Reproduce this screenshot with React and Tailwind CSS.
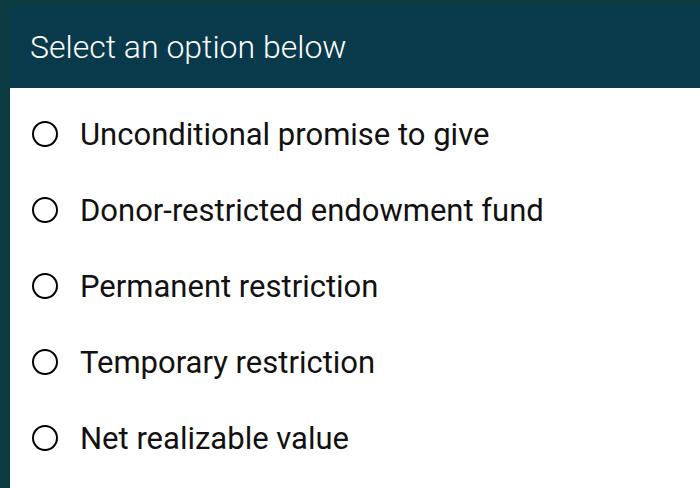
import React from 'react';

const options = [
  'Unconditional promise to give',
  'Donor-restricted endowment fund',
  'Permanent restriction',
  'Temporary restriction',
  'Net realizable value',
];

export default function App() {
  return (
    <div className="w-[700px] h-[488px] overflow-hidden bg-[#0b3b40] pt-[5px] pl-[10px]" style={{ fontFamily: 'Roboto, "Liberation Sans", sans-serif' }}>
      <div className="h-[83px] bg-[#083a4c] flex items-center pl-[20px]">
        <span className="text-white text-[32px] leading-none font-light">Select an option below</span>
      </div>
      <div className="bg-white h-[400px] pt-[8px]">
        {options.map((o) => (
          <label key={o} className="flex items-center h-[76px] pl-[22px] cursor-pointer">
            <span className="w-[26px] h-[26px] rounded-full border-2 border-black shrink-0"></span>
            <span className="ml-[22px] text-[31px] leading-none text-[#111]">{o}</span>
          </label>
        ))}
      </div>
    </div>
  );
}
